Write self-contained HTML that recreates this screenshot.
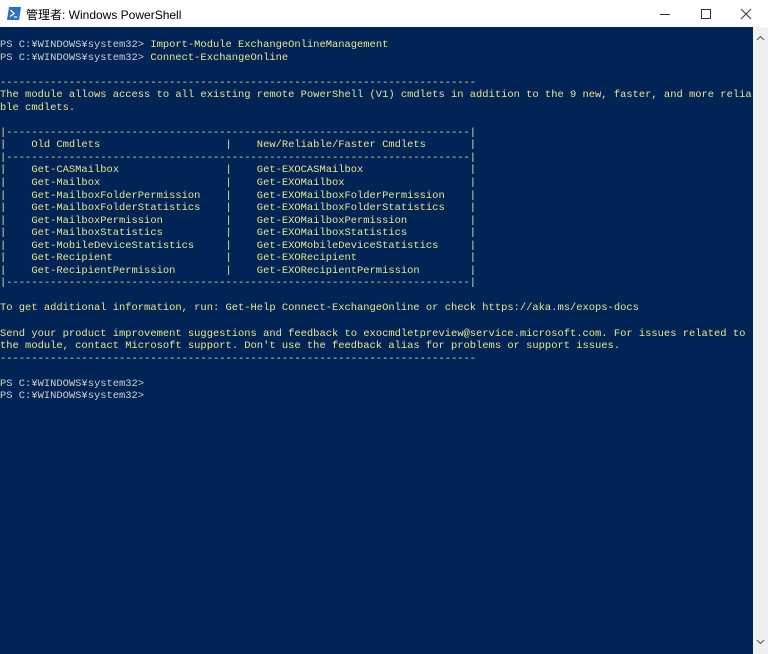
<!DOCTYPE html>
<html><head><meta charset="utf-8"><style>
html,body{margin:0;padding:0;width:768px;height:654px;overflow:hidden;background:#fff;}
.title{position:absolute;left:0;top:0;width:768px;height:27px;background:#fff;border-bottom:1px solid #ccc;}
.title .t{position:absolute;left:26px;top:6px;font:12px "Liberation Sans","Noto Sans CJK JP",sans-serif;color:#000;}
.con{position:absolute;left:0;top:27px;width:753px;height:627px;background:#012456;overflow:hidden;}
.sb{position:absolute;left:753px;top:27px;width:15px;height:627px;background:#f0f0f0;}
pre{position:absolute;left:0;top:12px;margin:0;font-family:"Liberation Mono",monospace;font-size:10.45px;line-height:12.55px;color:#cfcfcf;white-space:pre;}
.y{color:#e6e68c;}
</style></head><body>
<div class="title">
<svg style="position:absolute;left:7px;top:7px" width="14" height="13" viewBox="0 0 14 13"><path d="M2 0H14L12 13H0Z" fill="#2a70c8"/><path d="M3.5 3L7 6.5L3 9.5" stroke="#fff" stroke-width="1.4" fill="none"/><path d="M7 10H10" stroke="#fff" stroke-width="1.2"/></svg>
<span class="t">管理者: Windows PowerShell</span>
<svg style="position:absolute;left:660px;top:8px" width="100" height="12" viewBox="0 0 100 12"><path d="M0 6.5H10" stroke="#333" stroke-width="1"/><rect x="41.5" y="1.5" width="9" height="9" fill="none" stroke="#333"/><path d="M81 1L91 11M91 1L81 11" stroke="#333" stroke-width="1"/></svg>
</div>
<div class="con"><pre>PS C:¥WINDOWS¥system32&gt; <span class="y">Import-Module ExchangeOnlineManagement</span>
PS C:¥WINDOWS¥system32&gt; <span class="y">Connect-ExchangeOnline</span>
<span class="y">
----------------------------------------------------------------------------
The module allows access to all existing remote PowerShell (V1) cmdlets in addition to the 9 new, faster, and more relia
ble cmdlets.

|--------------------------------------------------------------------------|
|    Old Cmdlets                    |    New/Reliable/Faster Cmdlets       |
|--------------------------------------------------------------------------|
|    Get-CASMailbox                 |    Get-EXOCASMailbox                 |
|    Get-Mailbox                    |    Get-EXOMailbox                    |
|    Get-MailboxFolderPermission    |    Get-EXOMailboxFolderPermission    |
|    Get-MailboxFolderStatistics    |    Get-EXOMailboxFolderStatistics    |
|    Get-MailboxPermission          |    Get-EXOMailboxPermission          |
|    Get-MailboxStatistics          |    Get-EXOMailboxStatistics          |
|    Get-MobileDeviceStatistics     |    Get-EXOMobileDeviceStatistics     |
|    Get-Recipient                  |    Get-EXORecipient                  |
|    Get-RecipientPermission        |    Get-EXORecipientPermission        |
|--------------------------------------------------------------------------|

To get additional information, run: Get-Help Connect-ExchangeOnline or check https://aka.ms/exops-docs

Send your product improvement suggestions and feedback to exocmdletpreview@service.microsoft.com. For issues related to
the module, contact Microsoft support. Don't use the feedback alias for problems or support issues.
----------------------------------------------------------------------------
</span>
PS C:¥WINDOWS¥system32&gt;
PS C:¥WINDOWS¥system32&gt;</pre></div>
<div class="sb">
<svg style="position:absolute;left:3px;top:8px" width="9" height="6"><path d="M1 5L4.5 1.5L8 5" stroke="#555" fill="none"/></svg>
<svg style="position:absolute;left:3px;top:612px" width="9" height="6"><path d="M1 1L4.5 4.5L8 1" stroke="#555" fill="none"/></svg>
</div>
</body></html>
